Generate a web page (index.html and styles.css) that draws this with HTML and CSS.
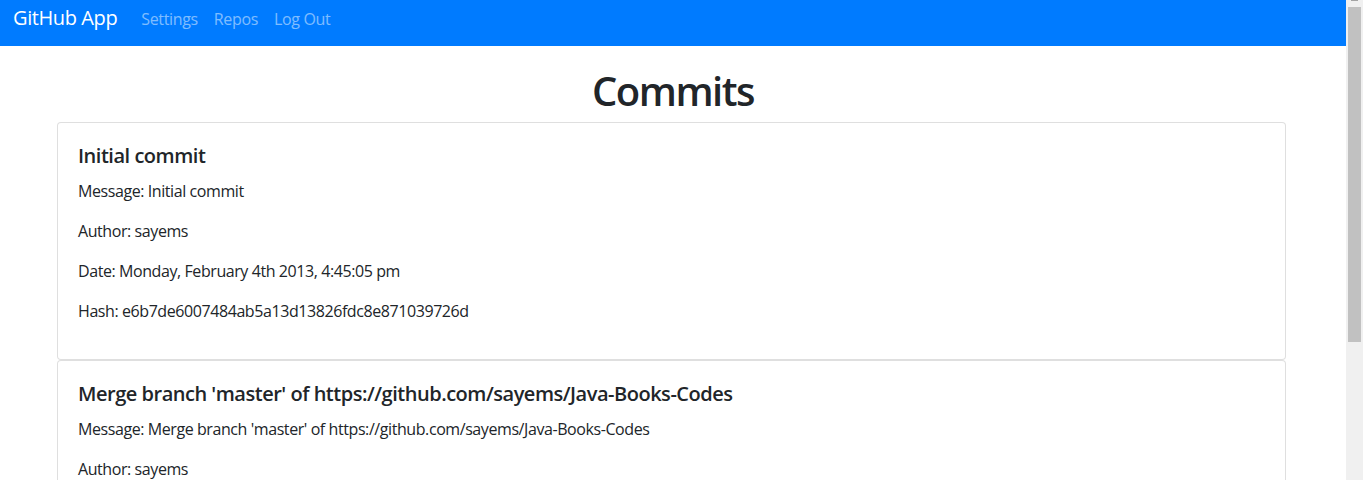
FILE: index.html
```html
<!DOCTYPE html>
<html lang="en">
<head>
<meta charset="utf-8">
<title>GitHub App</title>
<link rel="stylesheet" href="styles.css">
</head>
<body>
<div class="page">
  <nav class="navbar">
    <a class="brand" href="#">GitHub App</a>
    <a class="nav-link" href="#">Settings</a>
    <a class="nav-link" href="#">Repos</a>
    <a class="nav-link" href="#">Log Out</a>
  </nav>
  <main class="content">
    <h1 class="page-title">Commits</h1>
    <div class="card">
      <div class="card-body">
        <h5 class="card-title">Initial commit</h5>
        <p>Message: Initial commit</p>
        <p>Author: sayems</p>
        <p>Date: Monday, February 4th 2013, 4:45:05 pm</p>
        <p>Hash: e6b7de6007484ab5a13d13826fdc8e871039726d</p>
      </div>
    </div>
    <div class="card">
      <div class="card-body">
        <h5 class="card-title">Merge branch 'master' of https://github.com/sayems/Java-Books-Codes</h5>
        <p>Message: Merge branch 'master' of https://github.com/sayems/Java-Books-Codes</p>
        <p>Author: sayems</p>
        <p>Date: Monday, February 4th 2013, 4:47:12 pm</p>
        <p>Hash: 3a1f0c9b52d7e84f6c2b90d1e7a4f35b8c06d2e9</p>
      </div>
    </div>
  </main>
</div>
<div class="scrollbar"><div class="scroll-arrow"></div><div class="scroll-thumb"></div></div>
</body>
</html>
```
FILE: styles.css
```css
html { overflow: hidden; }
body {
  margin: 0;
  font-family: "Open Sans", "Noto Sans", sans-serif;
  font-size: 16px;
  line-height: 1.5;
  color: #212529;
  background: #fff;
}
.page { margin-right: 17px; }
.navbar {
  height: 46px;
  box-sizing: border-box;
  background: #007bff;
  display: flex;
  align-items: baseline;
  padding: 3px 16px 0 13px;
}
.brand {
  font-size: 20px;
  line-height: 30px;
  color: #fff;
  text-decoration: none;
  margin-right: 16px;
  letter-spacing: -0.4px;
}
.nav-link {
  color: rgba(255,255,255,.5);
  text-decoration: none;
  padding: 0 8px;
  letter-spacing: -0.35px;
}
.content { padding-bottom: 55px; }
.page-title {
  font-size: 40px;
  font-weight: 600;
  line-height: 48px;
  text-align: center;
  margin: 21px 0 7px;
  letter-spacing: -1.5px;
}
.card {
  box-sizing: border-box;
  width: 1229px;
  margin-left: 57px;
  border: 1px solid rgba(0,0,0,.125);
  border-radius: 4px;
  background: #fff;
}
.card-body { padding: 20px; }
.card-title {
  font-size: 20px;
  font-weight: 600;
  line-height: 24px;
  margin: 1px 0 11px;
  letter-spacing: -0.48px;
}
.card-body p {
  margin: 0 0 16px;
  letter-spacing: -0.42px;
}
.scrollbar {
  position: fixed;
  top: 0; right: 0; bottom: 0;
  width: 17px;
  background: #f0f0f0;
}
.scroll-arrow {
  position: absolute;
  top: 0; left: 5px;
  width: 7px; height: 1px;
  background: #a3a3a3;
}
.scroll-thumb {
  position: absolute;
  top: 7px; left: 2px;
  width: 13px; height: 335px;
  background: #c1c1c1;
}
```
